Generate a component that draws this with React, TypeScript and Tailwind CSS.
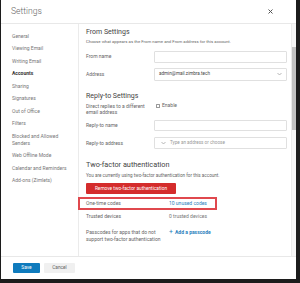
import React from 'react';

const navItems = [
  'General',
  'Viewing Email',
  'Writing Email',
  'Accounts',
  'Sharing',
  'Signatures',
  'Out of Office',
  'Filters',
  'Blocked and Allowed Senders',
  'Web Offline Mode',
  'Calendar and Reminders',
  'Add-ons (Zimlets)',
];

function Chevron() {
  return (
    <svg width="5" height="4" viewBox="0 0 10 6" fill="none" stroke="#a5a5a5" strokeWidth="1.6">
      <path d="M1 1l4 4 4-4" />
    </svg>
  );
}

function Field({ children }: { children?: React.ReactNode }) {
  return (
    <div className="flex-1 h-full border border-[#e0e0e0] rounded-[1px] flex items-center px-[4px] text-[4.6px] text-[#444]">
      {children}
    </div>
  );
}

export default function App() {
  return (
    <div className="w-[300px] h-[283px] bg-[#1c1c1c] flex pl-[1px] pr-[4px] pb-[4px]" style={{ fontFamily: 'Roboto, "Liberation Sans", sans-serif' }}>
      <div className="w-[295px] h-[279px] bg-white flex flex-col">
        <div className="h-[24px] shrink-0 border-b border-[#e8e8e8] flex items-center justify-between pl-[10px] pr-[23px]">
          <span className="text-[8.6px] text-[#666] font-light">Settings</span>
          <svg width="5" height="5" viewBox="0 0 10 10" stroke="#555" strokeWidth="2">
            <path d="M1 1l8 8M9 1l-8 8" />
          </svg>
        </div>

        <div className="flex h-[232px] shrink-0">
          <div className="w-[78px] shrink-0 border-r border-[#ebebeb] pt-[5.75px]">
            {navItems.map((item) => (
              <div
                key={item}
                className={`pl-[11px] pr-[8px] py-[2.75px] text-[5px] leading-[7px] ${item === 'Accounts' ? 'font-bold text-[#333]' : 'text-[#777]'}`}
              >
                {item}
              </div>
            ))}
          </div>

          <div className="flex-1 flex">
            <div className="flex-1 pl-[7px] pr-[4px] flex flex-col">
              <div className="mt-[3.5px] text-[7px] leading-[9px] text-[#444]">From Settings</div>
              <div className="mt-[2.2px] text-[4.3px] leading-[6px] text-[#666]">Choose what appears as the From name and From address for this account.</div>

              <div className="mt-[6px] flex items-center h-[12px]">
                <div className="w-[68px] text-[5px] text-[#666]">From name</div>
                <Field />
              </div>
              <div className="mt-[5.6px] flex items-center h-[12.4px]">
                <div className="w-[68px] text-[5px] text-[#666]">Address</div>
                <Field>
                  <span className="flex-1">admin@mail.zimbra.tech</span>
                  <Chevron />
                </Field>
              </div>

              <div className="mt-[11.5px] text-[7px] leading-[9px] text-[#444]">Reply-to Settings</div>
              <div className="mt-[1.5px] flex">
                <div className="w-[68px] text-[5px] leading-[6px] text-[#666]">Direct replies to a different email address</div>
                <div className="flex items-center h-[6px] gap-[2px] pl-[2px] text-[5px] text-[#666]">
                  <span className="w-[4px] h-[4px] border border-[#999] rounded-[0.5px]" />
                  Enable
                </div>
              </div>
              <div className="mt-[5.3px] flex items-center h-[11px]">
                <div className="w-[68px] text-[5px] text-[#666]">Reply-to name</div>
                <Field />
              </div>
              <div className="mt-[6.3px] flex items-center h-[12px]">
                <div className="w-[68px] text-[5px] text-[#666]">Reply-to address</div>
                <Field>
                  <span className="mr-[4px] ml-[2px]"><Chevron /></span>
                  <span className="text-[#999]">Type an address or choose</span>
                </Field>
              </div>

              <div className="mt-[10.5px] text-[7.3px] leading-[9px] text-[#444]">Two-factor authentication</div>
              <div className="mt-[4.2px] text-[4.6px] leading-[6px] text-[#666]">You are currently using two-factor authentication for this account.</div>
              <div className="mt-[4.3px] w-[90px] h-[11px] bg-[#d42c2c] rounded-[1px] flex items-center justify-center text-white text-[4.8px]">
                Remove two-factor authentication
              </div>

              <div className="mt-[3px] -ml-[8px] w-[139px] h-[12.7px] border-2 border-[#e0484e] flex items-center pl-[6px] text-[5px]">
                <span className="w-[83px] text-[#666]">One-time codes</span>
                <span className="text-[#2a80bd]">10 unused codes</span>
              </div>
              <div className="mt-[3px] flex items-center h-[8px] text-[5px]">
                <span className="w-[83px] text-[#666]">Trusted devices</span>
                <span className="text-[#777]">0 trusted devices</span>
              </div>
              <div className="mt-[8.2px] flex text-[5px] leading-[7px]">
                <span className="w-[83px] pr-[8px] text-[#666]">Passcodes for apps that do not support two-factor authentication</span>
                <span className="flex items-start gap-[2px] text-[#2a80bd] font-bold">
                  <span className="text-[7px] leading-[7px] font-normal">+</span>
                  Add a passcode
                </span>
              </div>
            </div>
            <div className="w-[5px] shrink-0 bg-[#f5f5f5] border-l border-[#eaeaea]">
              <div className="mt-[23px] h-[83px] bg-[#c2c2c2]" />
            </div>
          </div>
        </div>

        <div className="flex-1 border-t border-[#e8e8e8] flex items-center gap-[4px] pl-[12px]">
          <div className="w-[27px] h-[10px] bg-[#0f7bbd] text-white text-[4.8px] flex items-center justify-center rounded-[1px]">Save</div>
          <div className="w-[31px] h-[10px] bg-[#f0f0f0] text-[#666] text-[4.8px] flex items-center justify-center rounded-[1px]">Cancel</div>
        </div>
      </div>
    </div>
  );
}
